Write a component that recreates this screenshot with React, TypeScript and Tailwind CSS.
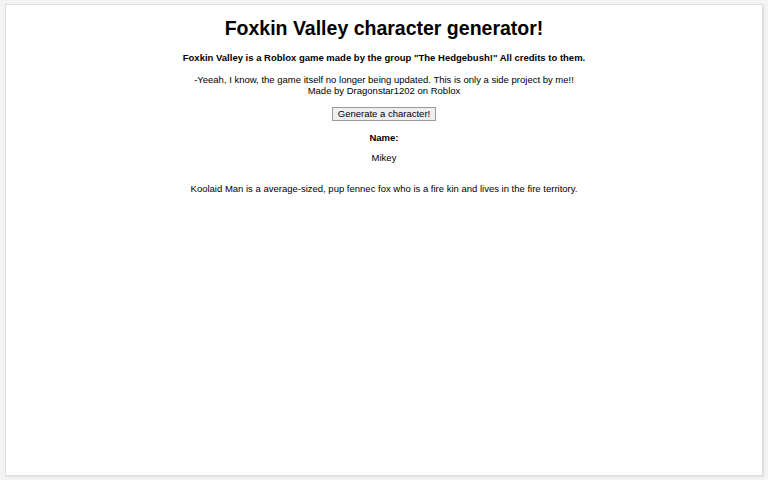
// Foxkin Valley character generator page
export default function App() {
  return (
    <div className="min-h-[480px] bg-[#f3f3f3] px-[5px] pt-[4px] pb-[4px] font-['Liberation_Sans',Arial,sans-serif] text-black">
      <div className="h-[472px] bg-white border border-[#dcdcdc] shadow-[1px_1px_2px_rgba(0,0,0,0.08)] flex flex-col items-center text-center">
        <h1 className="mt-[10px] text-[19.5px] font-bold leading-[26px]">Foxkin Valley character generator!</h1>
        <p className="mt-[11px] text-[9.5px] font-bold leading-[12px]">
          Foxkin Valley is a Roblox game made by the group "The Hedgebush!" All credits to them.
        </p>
        <p className="mt-[10px] text-[9.5px] leading-[11px]">
          -Yeeah, I know, the game itself no longer being updated. This is only a side project by me!!
          <br />
          Made by Dragonstar1202 on Roblox
        </p>
        <button
          type="button"
          className="mt-[11px] px-[5px] h-[14px] text-[9.5px] leading-[12px] bg-[#efefef] border border-[#9a9a9a]"
        >
          Generate a character!
        </button>
        <p className="mt-[11px] text-[9.5px] font-bold leading-[12px]">Name:</p>
        <p className="mt-[8px] text-[9.5px] leading-[12px]">Mikey</p>
        <p className="mt-[19px] text-[9.5px] leading-[12px]">
          Koolaid Man is a average-sized, pup fennec fox who is a fire kin and lives in the fire territory.
        </p>
      </div>
    </div>
  );
}
